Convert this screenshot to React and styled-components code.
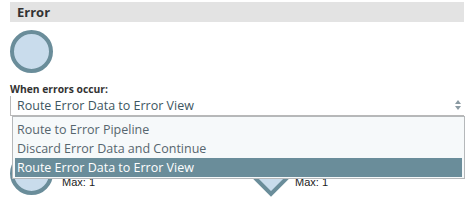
import React from 'react'
import styled, { createGlobalStyle } from 'styled-components'

const Global = createGlobalStyle`
  body {
    margin: 0;
    background: #fff;
    font-family: 'Open Sans', 'Noto Sans', sans-serif;
  }
`

export const Page = styled.div`
  position: relative;
  width: 474px;
  height: 206px;
  overflow: hidden;
  padding: 2px 10px 0 10px;
  box-sizing: border-box;
`

export const Header = styled.div`
  height: 20px;
  width: 454px;
  background: #e3e3e3;
  padding-left: 7px;
  box-sizing: border-box;
  display: flex;
  align-items: center;
  font-weight: 700;
  font-size: 13px;
  color: #333;
`

export const Node = styled.div`
  width: 43px;
  height: 43px;
  border-radius: 50%;
  background: #c9dcec;
  border: 4px solid #6a8d9a;
  box-sizing: border-box;
  margin-top: ${p => p.top || 0}px;
  flex-shrink: 0;
`

export const Label = styled.div`
  margin-top: 9px;
  font-size: 10.3px;
  font-weight: 700;
  color: #333;
  line-height: 14px;
`

export const Select = styled.div`
  position: relative;
  height: 20px;
  width: 454px;
  box-sizing: border-box;
  border-left: 1px solid #bbb;
  border-bottom: 1px solid #b8b8b8;
  padding-left: 6px;
  display: flex;
  align-items: center;
  font-size: 12.5px;
  color: #3e5661;
`

export const Arrows = styled.div`
  position: absolute;
  right: 3px;
  top: 4px;
  display: flex;
  flex-direction: column;
  gap: 2px;
`

export const Arrow = styled.div`
  width: 0;
  height: 0;
  border-left: 3px solid transparent;
  border-right: 3px solid transparent;
  ${p => (p.up ? 'border-bottom: 4px solid #8a9aa2;' : 'border-top: 4px solid #8a9aa2;')}
`

export const List = styled.div`
  position: absolute;
  left: 12px;
  top: 116px;
  width: 453px;
  height: 63px;
  box-sizing: border-box;
  border: 1px solid #b5b8ba;
  background: #f6f9fa;
  padding: 3px 2px 0 2px;
  z-index: 2;
`

export const Option = styled.div`
  height: 19px;
  line-height: 19px;
  padding-left: 2px;
  font-size: 12.5px;
  color: ${p => (p.active ? '#fff' : '#56666e')};
  background: ${p => (p.active ? '#6a8d9a' : 'transparent')};
`

export const Nodes = styled.div`
  display: flex;
  margin-top: 36px;
`

export const NodeCol = styled.div`
  display: flex;
  align-items: flex-end;
  gap: ${p => p.gap}px;
  width: ${p => p.w}px;
`

export const Tri = styled.svg`
  margin-bottom: -3px;
  flex-shrink: 0;
`

export const Max = styled.div`
  font-family: 'Liberation Sans', Arial, sans-serif;
  font-size: 11px;
  color: #222;
  padding-bottom: 7px;
  margin-left: ${p => p.pull || 0}px;
`

export default function App() {
  return (
    <>
      <Global />
      <Page>
        <Header>Error</Header>
        <Node top={8} />
        <Label>When errors occur:</Label>
        <Select>
          Route Error Data to Error View
          <Arrows>
            <Arrow up />
            <Arrow />
          </Arrows>
        </Select>
        <Nodes>
          <NodeCol w={231} gap={9}>
            <Node />
            <Max>Max: 1</Max>
          </NodeCol>
          <NodeCol w={140} gap={0}>
            <Tri width="60" height="34" viewBox="0 0 60 34">
              <polygon points="3,3 57,3 30,30" fill="#c9dcec" stroke="#6a8d9a" strokeWidth="4" />
            </Tri>
            <Max pull={-6}>Max: 1</Max>
          </NodeCol>
        </Nodes>
        <List>
          <Option>Route to Error Pipeline</Option>
          <Option>Discard Error Data and Continue</Option>
          <Option active>Route Error Data to Error View</Option>
        </List>
      </Page>
    </>
  )
}
